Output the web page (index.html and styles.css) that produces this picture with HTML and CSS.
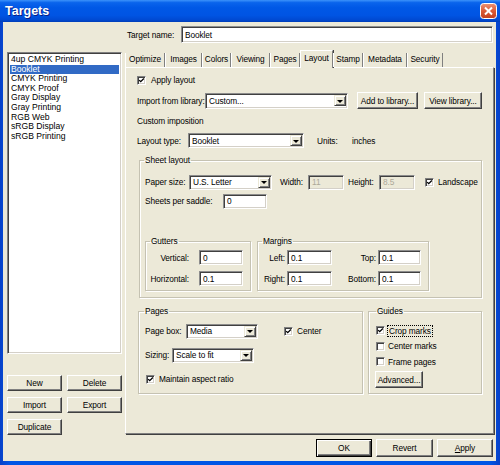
FILE: index.html
```html
<!DOCTYPE html>
<html lang="en">
<head>
    <meta charset="UTF-8">
    <title>Targets</title>
    <link rel="stylesheet" href="styles.css">
</head>
<body>

<div class="window">
    <div class="titlebar">
        <span class="title">Targets</span>
        <svg class="close" width="17" height="16" viewBox="0 0 17 16">
            <defs>
                <linearGradient id="closeGrad" x1="0" y1="0" x2="0" y2="1">
                    <stop offset="0" stop-color="#EC9476"/>
                    <stop offset="0.5" stop-color="#DA5A36"/>
                    <stop offset="1" stop-color="#C2401F"/>
                </linearGradient>
            </defs>
            <rect x="0.5" y="0.5" width="16" height="15" rx="3" fill="url(#closeGrad)" stroke="#fff"/>
            <path d="M5 4.5 L12 11.5 M12 4.5 L5 11.5" stroke="#fff" stroke-width="2"/>
        </svg>
    </div>

    <div class="client">
        <div class="side">
            <ul class="list">
                <li>4up CMYK Printing</li>
                <li class="selected">Booklet</li>
                <li>CMYK Printing</li>
                <li>CMYK Proof</li>
                <li>Gray Display</li>
                <li>Gray Printing</li>
                <li>RGB Web</li>
                <li>sRGB Display</li>
                <li>sRGB Printing</li>
            </ul>
            <div class="side-buttons">
                <button class="btn">New</button>
                <button class="btn">Delete</button>
                <button class="btn">Import</button>
                <button class="btn">Export</button>
                <button class="btn">Duplicate</button>
            </div>
        </div>

        <div class="main">
            <div class="name-row">
                <span class="name-label">Target name:</span>
                <span class="field name-field">Booklet</span>
            </div>

            <div class="tabs">
                <span class="tab tab-optimize">Optimize</span>
                <span class="tab tab-images">Images</span>
                <span class="tab tab-colors">Colors</span>
                <span class="tab tab-viewing">Viewing</span>
                <span class="tab tab-pages">Pages</span>
                <span class="tab tab-layout active">Layout</span>
                <span class="tab tab-stamp">Stamp</span>
                <span class="tab tab-metadata">Metadata</span>
                <span class="tab tab-security">Security</span>
            </div>

            <div class="panel">
                <div class="row row-check">
                    <span class="cb"><svg viewBox="0 0 9 9"><path d="M1.5 4 L3.5 6 L7.5 2"/></svg></span>
                    <span>Apply layout</span>
                </div>

                <div class="row row-ctrl import-row">
                    <span class="lbl lbl-import">Import from library:</span>
                    <span class="field select sel-import">Custom...<span class="arrow"></span></span>
                    <button class="btn btn-add">Add to library...</button>
                    <button class="btn btn-view">View library...</button>
                </div>

                <div class="row custom-row">Custom imposition</div>

                <div class="row row-ctrl layout-row">
                    <span class="lbl lbl-layout">Layout type:</span>
                    <span class="field select sel-layout">Booklet<span class="arrow"></span></span>
                    <span class="lbl lbl-units">Units:</span>
                    <span>inches</span>
                </div>

                <fieldset class="group sheet">
                    <legend>Sheet layout</legend>
                    <div class="row row-ctrl paper-row">
                        <span class="lbl lbl-paper">Paper size:</span>
                        <span class="field select sel-paper">U.S. Letter<span class="arrow"></span></span>
                        <span class="lbl lbl-width">Width:</span>
                        <span class="field disabled dim">11</span>
                        <span class="lbl lbl-height">Height:</span>
                        <span class="field disabled dim">8.5</span>
                        <span class="cb cb-landscape"><svg viewBox="0 0 9 9"><path d="M1.5 4 L3.5 6 L7.5 2"/></svg></span>
                        <span class="cb-text">Landscape</span>
                    </div>
                    <div class="row row-ctrl saddle-row">
                        <span class="lbl lbl-saddle">Sheets per saddle:</span>
                        <span class="field num">0</span>
                    </div>

                    <div class="subgroups">
                        <fieldset class="group gutters">
                            <legend>Gutters</legend>
                            <div class="grid gutter-grid">
                                <span class="rlbl">Vertical:</span>
                                <span class="field">0</span>
                                <span class="rlbl">Horizontal:</span>
                                <span class="field">0.1</span>
                            </div>
                        </fieldset>
                        <fieldset class="group margins">
                            <legend>Margins</legend>
                            <div class="grid margin-grid">
                                <span class="rlbl">Left:</span>
                                <span class="field">0.1</span>
                                <span class="rlbl">Top:</span>
                                <span class="field">0.1</span>
                                <span class="rlbl">Right:</span>
                                <span class="field">0.1</span>
                                <span class="rlbl">Bottom:</span>
                                <span class="field">0.1</span>
                            </div>
                        </fieldset>
                    </div>
                </fieldset>

                <div class="bottom-groups">
                    <fieldset class="group pages">
                        <legend>Pages</legend>
                        <div class="row row-ctrl pagebox-row">
                            <span class="lbl lbl-pagebox">Page box:</span>
                            <span class="field select sel-pagebox">Media<span class="arrow"></span></span>
                            <span class="cb cb-center"><svg viewBox="0 0 9 9"><path d="M1.5 4 L3.5 6 L7.5 2"/></svg></span>
                            <span class="cb-text">Center</span>
                        </div>
                        <div class="row row-ctrl sizing-row">
                            <span class="lbl lbl-sizing">Sizing:</span>
                            <span class="field select sel-sizing">Scale to fit<span class="arrow"></span></span>
                        </div>
                        <div class="row row-check aspect-row">
                            <span class="cb"><svg viewBox="0 0 9 9"><path d="M1.5 4 L3.5 6 L7.5 2"/></svg></span>
                            <span>Maintain aspect ratio</span>
                        </div>
                    </fieldset>

                    <fieldset class="group guides">
                        <legend>Guides</legend>
                        <div class="row guide-row">
                            <span class="cb"><svg viewBox="0 0 9 9"><path d="M1.5 4 L3.5 6 L7.5 2"/></svg></span>
                            <span class="focus">Crop marks</span>
                        </div>
                        <div class="row guide-row">
                            <span class="cb"></span>
                            <span>Center marks</span>
                        </div>
                        <div class="row guide-row">
                            <span class="cb"></span>
                            <span>Frame pages</span>
                        </div>
                        <button class="btn btn-advanced">Advanced...</button>
                    </fieldset>
                </div>
            </div>

            <div class="dialog-buttons">
                <button class="btn btn-default">OK</button>
                <button class="btn btn-revert">Revert</button>
                <button class="btn btn-apply"><u>A</u>pply</button>
            </div>
        </div>
    </div>
</div>

</body>
</html>
```

FILE: styles.css
```css
* {
    box-sizing: border-box;
}
body {
    margin: 0;
    font-family: "Liberation Sans", Arial, sans-serif;
    font-size: 8.3px;
    letter-spacing: -0.1px;
    color: #000;
}
.window {
    width: 500px;
    height: 465px;
    display: flex;
    flex-direction: column;
    background: linear-gradient(to right, #0841C8, #0055E5 2%, #0055E5 98%, #0841C8);
}
.titlebar {
    height: 22px;
    display: flex;
    align-items: center;
    justify-content: space-between;
    padding: 0 3px 0 5px;
    background: linear-gradient(to bottom, #3C92FA 0%, #0A64EC 12%, #0058E6 35%, #0054E3 70%, #0049D2 90%, #003DB8 100%);
}
.title {
    color: #fff;
    font: bold 12.5px "Liberation Sans", Arial, sans-serif;
    letter-spacing: 0;
    text-shadow: 1px 1px #0A1E86;
}
.close {
    display: block;
}
.client {
    flex: 1;
    margin: 0 4px 4px 3px;
    background: #ECE9D8;
    display: flex;
    gap: 3px;
    padding: 0 2px 0 4px;
    white-space: nowrap;
}

/* left column */
.side {
    width: 115px;
    padding-top: 30px;
}
.list {
    list-style: none;
    margin: 0;
    padding: 2px 2px 0 2px;
    height: 302px;
    background: #fff;
    border: 1px solid;
    border-color: #808080 #fff #fff #808080;
    box-shadow: inset 1px 1px #404040, inset -1px -1px #D4D0C8;
}
.list li {
    height: 9.6px;
    line-height: 9.6px;
    padding-left: 1px;
    font-size: 8.6px;
    letter-spacing: 0;
}
.list li.selected {
    background: #316AC5;
    color: #fff;
}
.side-buttons {
    margin-top: 21px;
    display: grid;
    grid-template-columns: 55px 55px;
    column-gap: 5px;
    row-gap: 6px;
}
.side-buttons .btn {
    height: 16px;
}

/* controls */
.btn {
    font: inherit;
    letter-spacing: inherit;
    color: #000;
    background: #ECE9D8;
    height: 17px;
    padding: 0;
    border: 1px solid;
    border-color: #fff #404040 #404040 #fff;
    box-shadow: inset -1px -1px #808080;
    white-space: nowrap;
}
.field {
    display: flex;
    align-items: center;
    height: 15px;
    padding: 0 3px;
    background: #fff;
    border: 1px solid;
    border-color: #8C8C8C #fff #fff #8C8C8C;
    box-shadow: inset 1px 1px #404040, inset -1px -1px #D4D0C8;
}
.field.disabled {
    background: #ECE9D8;
    color: #ACA899;
}
.select {
    padding-right: 1px;
}
.arrow {
    margin-left: auto;
    width: 12px;
    height: 11px;
    display: flex;
    align-items: center;
    justify-content: center;
    background: #ECE9D8;
    border: 1px solid;
    border-color: #ECE9D8 #404040 #404040 #ECE9D8;
    box-shadow: inset 1px 1px #fff, inset -1px -1px #808080;
}
.arrow::after {
    content: "";
    border-left: 3px solid transparent;
    border-right: 3px solid transparent;
    border-top: 3px solid #000;
    margin-top: 1px;
}
.cb {
    width: 9px;
    height: 9px;
    flex: none;
    background: #fff;
    border: 1px solid;
    border-color: #808080 #fff #fff #808080;
    box-shadow: inset 1px 1px #404040, inset -1px -1px #D4D0C8;
    display: flex;
}
.cb svg {
    width: 7px;
    height: 7px;
}
.cb path {
    fill: none;
    stroke: #000;
    stroke-width: 1.7;
}

/* right column */
.main {
    flex: 1;
    display: flex;
    flex-direction: column;
    padding-top: 4px;
}
.name-row {
    height: 17px;
    display: flex;
    align-items: center;
}
.name-label {
    width: 56px;
    padding-left: 2px;
}
.name-field {
    flex: 1;
    height: 17px;
    margin-right: 1px;
}
.tabs {
    margin-top: 7px;
    height: 17px;
    display: flex;
    align-items: flex-end;
    position: relative;
    z-index: 1;
}
.tab {
    height: 14px;
    line-height: 13px;
    text-align: center;
    border-left: 1px solid #fff;
    border-right: 1px solid #808080;
}
.tab-optimize { width: 40px; }
.tab-images { width: 37px; }
.tab-colors { width: 29px; }
.tab-viewing { width: 39px; }
.tab-pages { width: 30px; }
.tab-layout { width: 33px; }
.tab-stamp { width: 30px; }
.tab-metadata { width: 44px; }
.tab-security { width: 36px; }
.tab.active {
    height: 18px;
    line-height: 14px;
    margin-bottom: -1px;
    background: #ECE9D8;
    border-top: 1px solid #fff;
    box-shadow: 1px 0 #404040;
}
.panel {
    height: 367px;
    padding: 6px 11px 0 11px;
    border: 1px solid;
    border-color: #fff #808080 #808080 #fff;
    box-shadow: 1px 1px #404040;
}
.row {
    display: flex;
    align-items: center;
}
.row-check {
    height: 12px;
    gap: 5px;
}
.row-ctrl {
    height: 17px;
}
.lbl {
    flex: none;
}
.import-row {
    margin-top: 6px;
}
.lbl-import {
    width: 68px;
}
.sel-import {
    width: 143px;
    height: 16px;
}
.btn-add {
    width: 61px;
    margin-left: 9px;
}
.btn-view {
    width: 58px;
    margin-left: 6px;
}
.custom-row {
    margin-top: 6px;
    height: 12px;
}
.layout-row {
    margin-top: 5px;
}
.lbl-layout {
    width: 51px;
}
.sel-layout {
    width: 116px;
}
.lbl-units {
    width: 35px;
    margin-left: 13px;
}

/* group boxes */
.group {
    margin: 0;
    padding: 0;
    border: 1px solid #C5C2B2;
    box-shadow: inset 1px 1px #fff, 1px 1px #fff;
    min-width: 0;
}
.group legend {
    height: 10px;
    line-height: 10px;
    padding: 0 1px;
}
.sheet {
    margin: 6px 0 0 2px;
    width: 343px;
    height: 143px;
    padding: 9px 0 0 5px;
}
.sheet legend {
    margin-left: -1px;
}
.lbl-paper {
    width: 44px;
}
.sel-paper {
    width: 83px;
}
.lbl-width {
    width: 28px;
    margin-left: 8px;
}
.dim {
    width: 36px;
}
.lbl-height {
    width: 31px;
    margin-left: 4px;
}
.cb-landscape {
    margin-left: 10px;
}
.cb-text {
    margin-left: 4px;
}
.paper-row {
    height: 16px;
}
.saddle-row {
    margin-top: 3px;
    height: 16px;
}
.lbl-saddle {
    width: 78px;
}
.num {
    width: 44px;
}
.subgroups {
    display: flex;
    gap: 6px;
    margin-top: 27px;
}
.gutters {
    width: 106px;
    height: 55px;
    padding: 4px 0 0 1px;
}
.gutters legend {
    margin-left: 3px;
}
.margins {
    width: 172px;
    height: 55px;
    padding: 4px 0 0 0;
}
.margins legend {
    margin-left: 4px;
}
.grid {
    display: grid;
    grid-auto-rows: 15px;
    row-gap: 6px;
    align-items: center;
}
.gutter-grid {
    grid-template-columns: 44px 44px;
    column-gap: 8px;
}
.margin-grid {
    grid-template-columns: 29px 45px 46px 43px;
}
.rlbl {
    text-align: right;
    padding-right: 2px;
}

.bottom-groups {
    display: flex;
    gap: 5px;
    margin: 8px 0 0 1px;
}
.pages {
    width: 225px;
    height: 88px;
    padding: 7px 0 0 6px;
}
.pages legend {
    margin-left: -1px;
}
.pagebox-row {
    height: 16px;
}
.lbl-pagebox {
    width: 41px;
}
.sel-pagebox {
    width: 72px;
}
.cb-center {
    margin-left: 26px;
}
.sizing-row {
    margin-top: 8px;
    height: 16px;
}
.lbl-sizing {
    width: 27px;
}
.sel-sizing {
    width: 82px;
}
.aspect-row {
    margin: 10px 0 0 1px;
    gap: 4px;
}
.guides {
    width: 114px;
    height: 88px;
    padding: 7px 0 0 7px;
}
.guide-row {
    height: 15.5px;
    gap: 3px;
}
.focus {
    outline: 1px dotted #000;
    padding: 0 1px;
}
.btn-advanced {
    width: 48px;
    margin: 1.5px 0 0 -1px;
}

.dialog-buttons {
    margin-top: 5px;
    display: flex;
    justify-content: flex-end;
    gap: 4px;
    padding-right: 1px;
}
.dialog-buttons .btn {
    height: 18px;
}
.btn-default {
    width: 56px;
    border-color: #000;
    box-shadow: inset 1px 1px #fff, inset -1px -1px #404040, inset -2px -2px #808080;
}
.btn-revert {
    width: 57px;
}
.btn-apply {
    width: 56px;
}
```
